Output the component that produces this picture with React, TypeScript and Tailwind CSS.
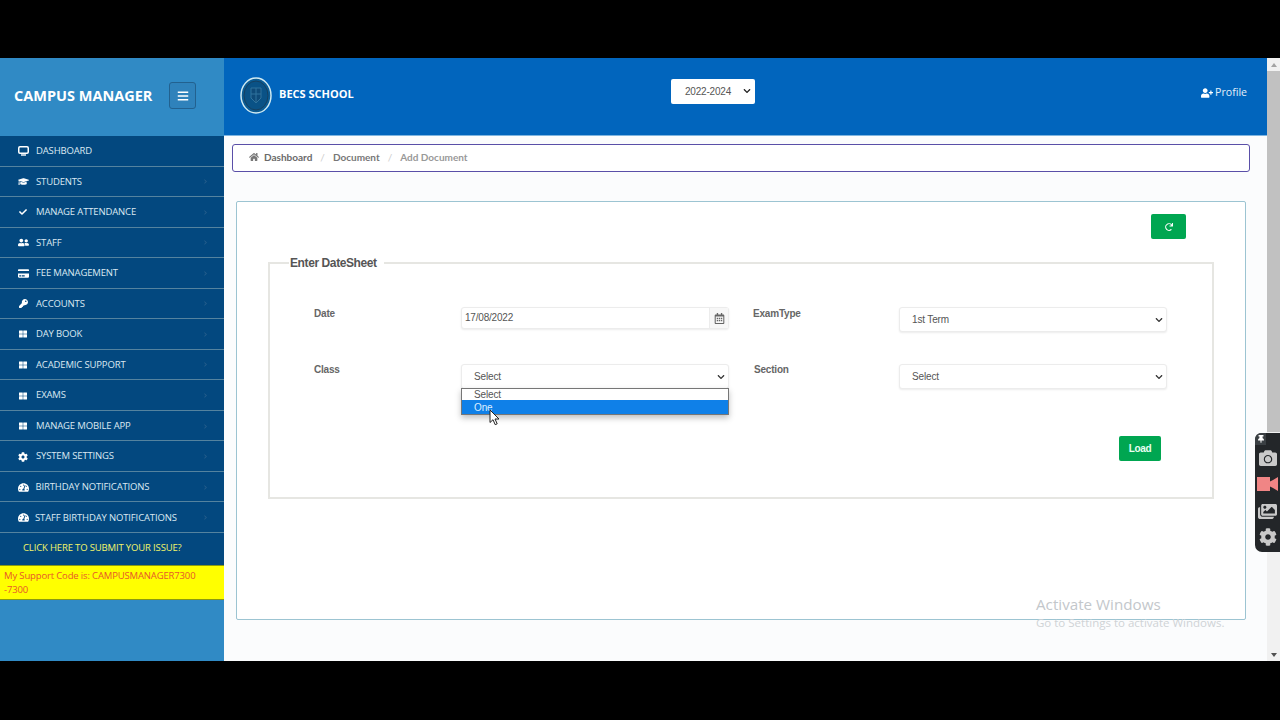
import { FaGraduationCap, FaCheck, FaUserFriends, FaCreditCard, FaKey, FaThLarge, FaCog, FaTachometerAlt, FaHome, FaUserPlus, FaRegCalendarAlt, FaRedo, FaBars, FaCamera, FaImages, FaThumbtack, FaChevronRight, FaChevronDown } from "react-icons/fa";
import type { ReactNode } from "react";

const Monitor = () => (
  <svg width="11" height="10" viewBox="0 0 11 10">
    <rect x="0.75" y="0.75" width="9.5" height="6.5" rx="1.2" fill="none" stroke="white" strokeWidth="1.5" />
    <path d="M3 9h5" stroke="white" strokeWidth="1.4" />
  </svg>
);

const Grid = <FaThLarge className="text-[8px]" />;

const nav: [string, ReactNode, boolean][] = [
  ["DASHBOARD", <Monitor />, false],
  ["STUDENTS", <FaGraduationCap className="text-[11px]" />, true],
  ["MANAGE ATTENDANCE", <FaCheck className="text-[8px]" />, true],
  ["STAFF", <FaUserFriends className="text-[11px]" />, true],
  ["FEE MANAGEMENT", <FaCreditCard className="text-[11px]" />, true],
  ["ACCOUNTS", <FaKey className="text-[9px]" />, true],
  ["DAY BOOK", Grid, true],
  ["ACADEMIC SUPPORT", Grid, true],
  ["EXAMS", Grid, true],
  ["MANAGE MOBILE APP", Grid, true],
  ["SYSTEM SETTINGS", <FaCog className="text-[10px]" />, true],
  ["BIRTHDAY NOTIFICATIONS", <FaTachometerAlt className="text-[11px]" />, true],
  ["STAFF BIRTHDAY NOTIFICATIONS", <FaTachometerAlt className="text-[11px]" />, true],
];

function SelectBox({ label, className = "" }: { label: string; className?: string }) {
  return (
    <div className={`flex w-[268px] items-center justify-between rounded-[3px] border border-[#ececec] bg-white pl-[12px] pr-[3px] text-[10px] tracking-[-0.15px] text-[#555] shadow-[0_1px_2px_rgba(0,0,0,0.08)] ${className}`}>
      <span>{label}</span>
      <FaChevronDown className="text-[8px] text-[#333]" />
    </div>
  );
}

export default function App() {
  return (
    <div className="flex h-[720px] w-[1280px] flex-col overflow-hidden bg-black pt-[58px] pb-[59px] font-['Open_Sans',sans-serif]">
      <div className="relative flex h-[603px] bg-[#fbfcfd]">
        <aside className="flex w-[224px] shrink-0 flex-col bg-[#308ac5]">
          <div className="flex h-[78px] items-center pl-[14px] pb-[3px]">
            <span className="w-[155px] text-[14.5px] font-bold text-white">CAMPUS MANAGER</span>
            <button className="flex h-[27px] w-[27px] items-center justify-center rounded-[3px] border border-[#22618f] bg-[#2f82bb] text-[12px] text-white">
              <FaBars />
            </button>
          </div>
          <nav className="flex h-[397px] flex-col bg-[#03487f]">
            {nav.map(([name, icon, arrow], i) => (
              <div key={name} className="flex flex-1 items-center border-b border-[#55839f] pt-px text-[9.5px] tracking-[-0.15px] text-[#dbe8f2]">
                <span className="ml-[15px] flex w-[16px] justify-center text-white">{icon}</span>
                <span className={`flex-1 ${i === 12 ? "ml-[4px]" : i === 11 ? "ml-[4.5px]" : "ml-[5px]"}`}>{name}</span>
                {arrow && <FaChevronRight className="mr-[16px] text-[5px] text-[#285f8c]" />}
              </div>
            ))}
          </nav>
          <div className="flex h-[32px] items-center bg-[#03487f] pb-[1px] pl-[23px] text-[9.5px] tracking-[-0.15px] text-[#f2f56a]">CLICK HERE TO SUBMIT YOUR ISSUE?</div>
          <div className="flex h-[35px] items-center whitespace-nowrap border-y border-[#8b9a10] bg-[#ffff00] px-[4px] text-[9.5px] leading-[13.5px] tracking-[-0.15px] text-[#e8562a]">
            <span>My Support Code is: CAMPUSMANAGER7300<br />-7300</span>
          </div>
        </aside>

        <main className="flex min-w-0 flex-1 flex-col">
          <header className="flex h-[78px] shrink-0 items-center border-b border-[#7fb5e0] bg-[#0165bd] pb-[4px] pl-[16px] pr-[20px] text-white">
            <svg width="32" height="37" viewBox="0 0 32 37" className="mt-px shrink-0">
              <ellipse cx="16" cy="18.5" rx="15" ry="17.5" fill="#0b5c94" stroke="#cfeaf2" strokeWidth="1.5" />
              <ellipse cx="16" cy="18.5" rx="12" ry="14.5" fill="#0a5286" stroke="#17405f" strokeWidth="1" />
              <path d="M11 11h10v10l-5 5-5-5z" fill="#0e4a78" stroke="#2f739d" strokeWidth="1" />
              <path d="M16 11v15M11 17h10" stroke="#2f739d" strokeWidth="1" />
            </svg>
            <span className="ml-[7px] w-[392px] text-[11px] font-bold">BECS SCHOOL</span>
            <div className="mb-[7px] flex h-[25px] w-[84px] items-center justify-between rounded-[2px] bg-white pl-[14px] pr-[4px] font-['Liberation_Sans',sans-serif] text-[10px] tracking-[-0.2px] text-[#555]">
              <span>2022-2024</span>
              <FaChevronDown className="text-[8px] text-[#222]" />
            </div>
            <div className="ml-auto mb-[3px] flex items-center gap-[2px] text-[10.6px] text-[#e5f0fa]">
              <FaUserPlus className="text-[12px] text-white" />
              <span>Profile</span>
            </div>
          </header>

          <div className="ml-[8px] mr-[17px] mt-[8px] flex h-[28px] shrink-0 items-center rounded-[3px] border border-[#5a4fa8] bg-white pb-[2px] pl-[16px] font-['Lato',sans-serif] text-[10px]">
            <FaHome className="text-[10px] text-[#777]" />
            <span className="ml-[5px] font-bold text-[#6a6a6a]">Dashboard</span>
            <span className="mx-[8px] text-[#ccc]">/</span>
            <span className="font-bold text-[#777]">Document</span>
            <span className="mx-[8px] text-[#ccc]">/</span>
            <span className="font-bold text-[#999]">Add Document</span>
          </div>

          <section className="relative ml-[12px] mr-[21px] mt-[29px] h-[419px] shrink-0 rounded-[2px] border border-[#9cc4d2] bg-white font-['Liberation_Sans',sans-serif]">
            <div className="flex justify-end pr-[59px] pt-[12px]">
              <button className="flex h-[25px] w-[35px] items-center justify-center rounded-[2px] bg-[#00a651] text-[8px] text-white">
                <FaRedo />
              </button>
            </div>
            <fieldset className="ml-[31px] mr-[31px] mt-[17px] h-[243px] border-2 border-[#e6e6e2] pl-[19px]">
              <legend className="px-px pr-[7px] text-[12px] leading-[14px] font-bold tracking-[-0.4px] text-[#555]">Enter DateSheet</legend>
              <div className="grid grid-cols-[147px_268px_24px_146px_268px] grid-rows-[25px_25px] gap-y-[32px] pl-[25px] pt-[37px] text-[10px] font-bold tracking-[-0.2px] text-[#666]">
                <span className="-mt-px">Date</span>
                <div className="flex h-[22px] w-[268px] items-center rounded-[3px] border border-[#ececec] bg-white font-normal text-[#555] shadow-[0_1px_2px_rgba(0,0,0,0.08)]">
                  <span className="flex-1 pb-[1px] pl-[3px] tracking-[-0.2px]">17/08/2022</span>
                  <span className="flex h-full w-[19px] items-center justify-center border-l border-[#ececec] bg-[#f7f7f7] text-[11px] text-[#666]"><FaRegCalendarAlt /></span>
                </div>
                <span></span>
                <span className="-mt-px">ExamType</span>
                <SelectBox label="1st Term" className="h-[25px] font-normal" />
                <span className="-mt-[2px]">Class</span>
                <SelectBox label="Select" className="h-[25px] font-normal" />
                <span></span>
                <span className="-mt-[2px] pl-px">Section</span>
                <SelectBox label="Select" className="h-[25px] font-normal" />
              </div>
              <div className="mr-[51px] mt-[47px] flex justify-end">
                <button className="h-[25px] w-[42px] rounded-[2px] bg-[#00a651] text-[10px] font-bold tracking-[-0.3px] text-[#eafff3]">Load</button>
              </div>
            </fieldset>
            <div className="absolute left-[224px] top-[186px] w-[268px] border border-[#767676] bg-white text-[10px] tracking-[-0.15px] text-[#555] shadow-[0_3px_6px_rgba(0,0,0,0.25)]">
              <div className="flex h-[11px] items-center pl-[12px]">Select</div>
              <div className="flex h-[14px] items-center bg-[#0f80e8] pl-[12px] text-[#dcefff]">One</div>
            </div>
            <svg width="11" height="17" viewBox="0 0 11 17" className="absolute left-[252px] top-[207px]">
              <path d="M1 1v12.5l3-2.8 2.2 5 2-0.9-2.2-4.8h4z" fill="white" stroke="#222" strokeWidth="1" strokeLinejoin="round" />
            </svg>
            <div className="absolute left-[799px] top-[392px] font-['Open_Sans',sans-serif] text-[15.2px] leading-[20px] text-[#c3c7cb]">Activate Windows</div>
          </section>
          <div className="relative">
            <span className="absolute left-[812px] top-[-6px] whitespace-nowrap text-[11.5px] text-[#cfd3d6]">Go to Settings to activate Windows.</span>
          </div>
        </main>

        <div className="flex w-[13px] shrink-0 flex-col items-center bg-[#f1f1f1]">
          <div className="flex h-[13px] items-center justify-center"><div className="h-0 w-0 border-x-[3.5px] border-b-[4px] border-x-transparent border-b-[#a3a3a3]"></div></div>
          <div className="h-[361px] w-full bg-[#c1c1c1]"></div>
          <div className="mt-auto flex h-[13px] items-center justify-center"><div className="h-0 w-0 border-x-[3.5px] border-t-[4px] border-x-transparent border-t-[#505050]"></div></div>
        </div>

        <div className="absolute left-[1255px] top-[375px] flex h-[119px] w-[25px] flex-col items-center rounded-l-[7px] bg-[#232629] text-[#c9c9c9]">
          <div className="absolute left-0 top-0 flex h-[12px] w-[11px] items-center justify-center rounded-tl-[6px] bg-[#3a3f43] text-[8px] text-white"><FaThumbtack /></div>
          <FaCamera className="mt-[16px] shrink-0 text-[18px]" />
          <svg width="21" height="14" viewBox="0 0 21 14" className="mt-[10px] shrink-0">
            <path d="M0 0h13v4.5l3-1.5 5-3v14l-5-3-3-1.500V14H0z" fill="#f08585" />
          </svg>
          <FaImages className="mt-[11px] shrink-0 text-[19px]" />
          <FaCog className="mt-[7px] shrink-0 text-[18px]" />
        </div>
      </div>
    </div>
  );
}
